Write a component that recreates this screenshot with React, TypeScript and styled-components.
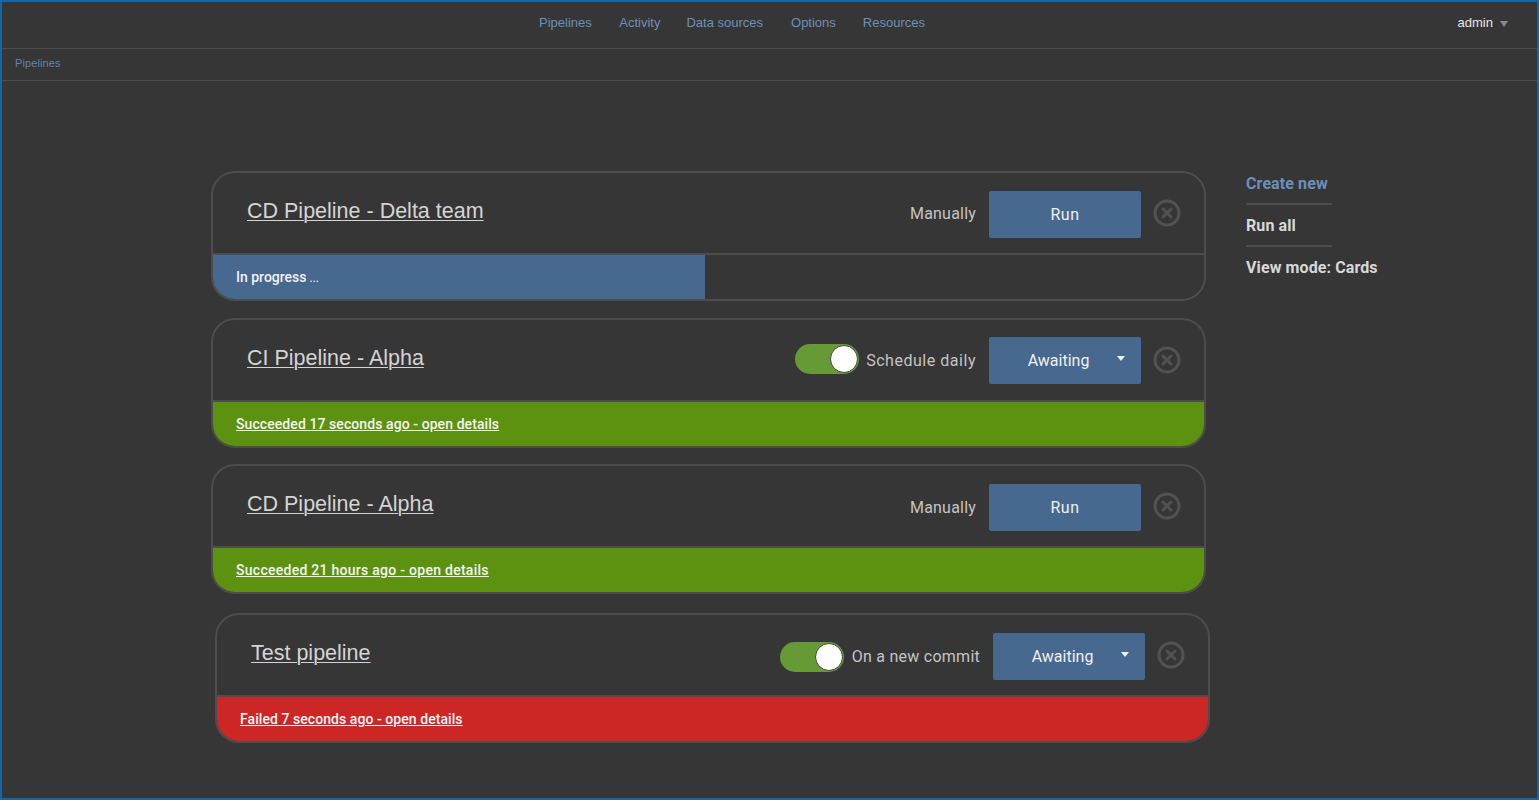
import styled, { createGlobalStyle } from 'styled-components'

type Status =
  | { kind: 'progress'; value: number; text: string }
  | { kind: 'ok' | 'fail'; text: string; track: number }

type Pipeline = {
  name: string
  trigger: string
  triggerTrack: number
  triggerDrop: number
  toggle?: { gap: number; y: number }
  action: string
  actionDrop: number
  shift: number
  gap: number
  status: Status
}

const navItems = [
  { label: 'Pipelines', left: 0 },
  { label: 'Activity', left: 27.5 },
  { label: 'Data sources', left: 26 },
  { label: 'Options', left: 28 },
  { label: 'Resources', left: 27 },
]

const pipelines: Pipeline[] = [
  { name: 'CD Pipeline - Delta team', trigger: 'Manually', triggerTrack: 0.2, triggerDrop: 0, action: 'Run', actionDrop: 1, shift: 0, gap: 0, status: { kind: 'progress', value: 49.6, text: 'In progress' } },
  { name: 'CI Pipeline - Alpha', trigger: 'Schedule daily', triggerTrack: 0.53, triggerDrop: 0, toggle: { gap: 7, y: -1 }, action: 'Awaiting', actionDrop: 0, shift: 0, gap: 17, status: { kind: 'ok', text: 'Succeeded 17 seconds ago - open details', track: 0.08 } },
  { name: 'CD Pipeline - Alpha', trigger: 'Manually', triggerTrack: 0.2, triggerDrop: 1, action: 'Run', actionDrop: 1, shift: 0, gap: 16, status: { kind: 'ok', text: 'Succeeded 21 hours ago - open details', track: 0.27 } },
  { name: 'Test pipeline', trigger: 'On a new commit', triggerTrack: 0.25, triggerDrop: 1, toggle: { gap: 8, y: 2 }, action: 'Awaiting', actionDrop: 1, shift: 4, gap: 19, status: { kind: 'fail', text: 'Failed 7 seconds ago - open details', track: 0.06 } },
]

const CloseIcon = () => (
  <svg width="28" height="28" viewBox="0 0 28 28" fill="none" stroke="#525252" strokeWidth="3">
    <circle cx="14" cy="14" r="12" />
    <path d="M10 10l8 8M18 10l-8 8" strokeLinecap="round" />
  </svg>
)

export default () => {
  return (
    <>
      <GlobalStyle />
      <SFrame>
        <STopBar>
          <SNav>
            {navItems.map((item) => (
              <SNavLink key={item.label} $left={item.left}>{item.label}</SNavLink>
            ))}
          </SNav>
          <SUser>admin<SUserCaret /></SUser>
        </STopBar>
        <SCrumbs>Pipelines</SCrumbs>
        <SMain>
          <SCards>
            {pipelines.map((p) => (
              <SCard key={p.name} $shift={p.shift} $gap={p.gap}>
                <SCardHead>
                  <STitle>{p.name}</STitle>
                  <SControls>
                    {p.toggle && <SToggle $gap={p.toggle.gap} $y={p.toggle.y}><SKnob /></SToggle>}
                    <STrigger $track={p.triggerTrack} $drop={p.triggerDrop}>{p.trigger}</STrigger>
                    <SAction $caret={p.action === 'Awaiting'} $drop={p.actionDrop}>
                      <span>{p.action}</span>
                      {p.action === 'Awaiting' && <SActionCaret />}
                    </SAction>
                    <SClose><CloseIcon /></SClose>
                  </SControls>
                </SCardHead>
                {p.status.kind === 'progress' ? (
                  <SStatusTrack>
                    <SProgress $value={p.status.value}>
                      {p.status.text}<SDots> ...</SDots>
                    </SProgress>
                  </SStatusTrack>
                ) : (
                  <SStatus $kind={p.status.kind}>
                    <SStatusLink $track={p.status.track}>{p.status.text}</SStatusLink>
                  </SStatus>
                )}
              </SCard>
            ))}
          </SCards>
          <SSide>
            <SSideItem $accent>Create new</SSideItem>
            <SSideItem>Run all</SSideItem>
            <SSideItem $last>View mode: Cards</SSideItem>
          </SSide>
        </SMain>
      </SFrame>
    </>
  )
}

const GlobalStyle = createGlobalStyle`
  html, body {
    margin: 0;
    padding: 0;
    background: #363636;
  }
`

const SFrame = styled.div`
  box-sizing: border-box;
  width: 1539px;
  height: 800px;
  border: 2px solid #1466a6;
  background: #363636;
  font-family: "Liberation Sans", Arial, sans-serif;
  overflow: hidden;
`

const STopBar = styled.div`
  height: 46px;
  border-bottom: 1px solid #4d4d4d;
  display: flex;
  align-items: center;
  padding-left: 537px;
  padding-right: 29px;
  justify-content: space-between;
`

const SNav = styled.div`
  display: flex;
  padding-bottom: 5px;
`

const SNavLink = styled.span<{ $left: number }>`
  margin-left: ${(p) => p.$left}px;
  color: #6c8fbd;
  font-size: 13px;
`

const SUser = styled.div`
  display: flex;
  align-items: center;
  color: #e8e8e8;
  font-size: 13px;
  padding-bottom: 5px;
`

const SUserCaret = styled.i`
  margin-left: 7px;
  margin-top: 3px;
  border-left: 4px solid transparent;
  border-right: 4px solid transparent;
  border-top: 6px solid #8a8a8a;
`

const SCrumbs = styled.div`
  height: 31px;
  box-sizing: content-box;
  border-bottom: 1px solid #4d4d4d;
  padding-left: 13px;
  line-height: 28px;
  font-size: 11px;
  letter-spacing: 0.1px;
  color: #5f83b5;
`

const SMain = styled.div`
  display: flex;
  align-items: flex-start;
  padding: 90px 0 0 209px;
`

const SCards = styled.div`
  width: 1000px;
  display: flex;
  flex-direction: column;
`

const SCard = styled.div<{ $shift: number; $gap: number }>`
  box-sizing: border-box;
  width: 995px;
  height: 130px;
  margin-left: ${(p) => p.$shift}px;
  margin-top: ${(p) => p.$gap}px;
  border: 2px solid #4d4d4d;
  border-radius: 24px;
  overflow: hidden;
  display: flex;
  flex-direction: column;
`

const SCardHead = styled.div`
  box-sizing: border-box;
  height: 82px;
  flex: none;
  border-bottom: 2px solid #4d4d4d;
  display: flex;
  align-items: center;
  justify-content: space-between;
  padding: 0 23px 0 34px;
`

const STitle = styled.a`
  margin-bottom: 3px;
  color: #d4d4d4;
  font-size: 21.5px;
  text-decoration: underline;
  text-underline-offset: 2px;
  text-decoration-thickness: 1px;
`

const SControls = styled.div`
  display: flex;
  align-items: center;
`

const SToggle = styled.div<{ $gap: number; $y: number }>`
  box-sizing: border-box;
  width: 64px;
  height: 30px;
  border-radius: 15px;
  background: #669a35;
  display: flex;
  justify-content: flex-end;
  align-items: center;
  margin-right: ${(p) => p.$gap}px;
  margin-top: ${(p) => p.$y * 2}px;
`

const SKnob = styled.span`
  width: 28px;
  height: 28px;
  border-radius: 50%;
  background: #fff;
  border: 1px solid #444;
  box-sizing: border-box;
  margin-right: 1px;
`

const STrigger = styled.span<{ $track: number; $drop: number }>`
  color: #c4c4c4;
  font-family: Roboto, "Liberation Sans", sans-serif;
  font-size: 16px;
  letter-spacing: ${(p) => p.$track}px;
  margin-right: 13px;
  margin-top: ${(p) => p.$drop * 2}px;
`

const SAction = styled.div<{ $caret: boolean; $drop: number }>`
  position: relative;
  box-sizing: border-box;
  width: 152px;
  height: 47px;
  margin-top: ${(p) => p.$drop * 2}px;
  padding-right: ${(p) => (p.$caret ? 13 : 0)}px;
  border-radius: 2px;
  background: #47688f;
  color: #f0f0f0;
  font-family: Roboto, "Liberation Sans", sans-serif;
  font-size: 16px;
  letter-spacing: ${(p) => (p.$caret ? 0 : 0.5)}px;
  display: flex;
  align-items: center;
  justify-content: center;
`

const SActionCaret = styled.i`
  position: absolute;
  right: 16px;
  top: 19px;
  border-left: 4.5px solid transparent;
  border-right: 4.5px solid transparent;
  border-top: 5px solid #f0f0f0;
`

const SClose = styled.div`
  display: flex;
  margin-left: 12px;
`

const SStatusTrack = styled.div`
  flex: 1;
  display: flex;
`

const SProgress = styled.div<{ $value: number }>`
  width: ${(p) => p.$value}%;
  background: #47688f;
  color: #f2f2f2;
  font-family: Roboto, "Liberation Sans", sans-serif;
  font-size: 14px;
  font-weight: 500;
  line-height: 44px;
  padding-left: 23px;
  box-sizing: border-box;
`

const SDots = styled.span`
  font-weight: 400;
  font-size: 12px;
`

const SStatus = styled.div<{ $kind: 'ok' | 'fail' }>`
  flex: 1;
  background: ${(p) => (p.$kind === 'ok' ? '#5c9210' : '#cc2725')};
  line-height: 44px;
  padding-left: 23px;
`

const SStatusLink = styled.a<{ $track: number }>`
  color: #f4f4f4;
  font-family: Roboto, "Liberation Sans", sans-serif;
  font-size: 14px;
  font-weight: 500;
  letter-spacing: ${(p) => p.$track}px;
  text-decoration: underline;
`

const SSide = styled.div`
  width: 86px;
  margin-left: 35px;
  padding-top: 1px;
  display: flex;
  flex-direction: column;
`

const SSideItem = styled.div<{ $accent?: boolean; $last?: boolean }>`
  box-sizing: border-box;
  height: 33px;
  margin-bottom: 9px;
  line-height: 24px;
  border-bottom: 2px solid ${(p) => (p.$last ? 'transparent' : '#4d4d4d')};
  color: ${(p) => (p.$accent ? '#6c8fbd' : '#d8d8d8')};
  font-family: Roboto, "Liberation Sans", sans-serif;
  font-size: 16px;
  font-weight: 700;
  letter-spacing: 0.1px;
  white-space: nowrap;
`
